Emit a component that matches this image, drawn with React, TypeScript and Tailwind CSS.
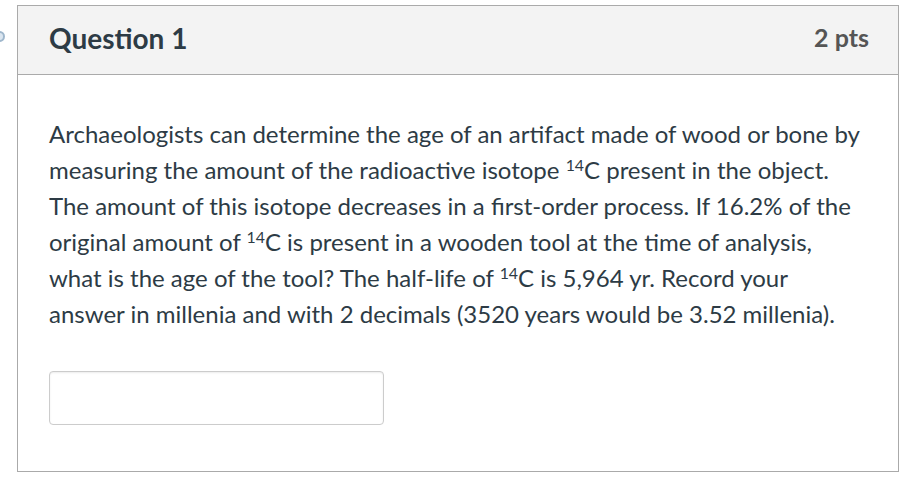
import React from "react";

function Sup14() {
  return <sup className="text-[0.66em]">14</sup>;
}

export default function App() {
  return (
    <div
      className="relative min-h-[497px] w-[909px] bg-white pl-[17px] pt-[5px]"
      style={{ fontFamily: "Lato, 'Open Sans', sans-serif" }}
    >
      {/* little side marker, clipped by the window edge */}
      <div className="absolute -left-[6px] top-[31px] h-[11px] w-[11px] rounded-full border-2 border-[#9fb7cc] bg-[#dbe6f0]" />

      <div className="w-[882px] border border-[#aaaaaa]">
        <div className="flex h-[69px] items-center justify-between border-b border-[#aaaaaa] bg-[#f3f3f3] pb-[5px] pl-[31px] pr-[29px]">
          <h2 className="text-[28px] font-bold text-[#2d3b45]">Question 1</h2>
          <span className="text-[25px] font-bold text-[#555555]">2 pts</span>
        </div>

        <div className="flex h-[396px] flex-col items-start gap-[39px] pl-[31px] pr-[36px] pt-[41px]">
          <p className="text-[24px] leading-[36px] text-[#2d3b45]">
            Archaeologists can determine the age of an artifact made of wood or bone by
            measuring the amount of the radioactive isotope <Sup14 />C present in the object.
            The amount of this isotope decreases in a first-order process. If 16.2% of the
            original amount of <Sup14 />C is present in a wooden tool at the time of analysis,
            what is the age of the tool? The half-life of <Sup14 />C is 5,964 yr. Record your
            answer in millenia and with 2 decimals (3520 years would be 3.52 millenia).
          </p>
          <input
            type="text"
            aria-label="answer"
            className="h-[54px] w-[335px] rounded-[4px] border border-[#cccccc] bg-white shadow-[inset_0_1px_2px_rgba(0,0,0,0.08)] outline-none"
          />
        </div>
      </div>
    </div>
  );
}
